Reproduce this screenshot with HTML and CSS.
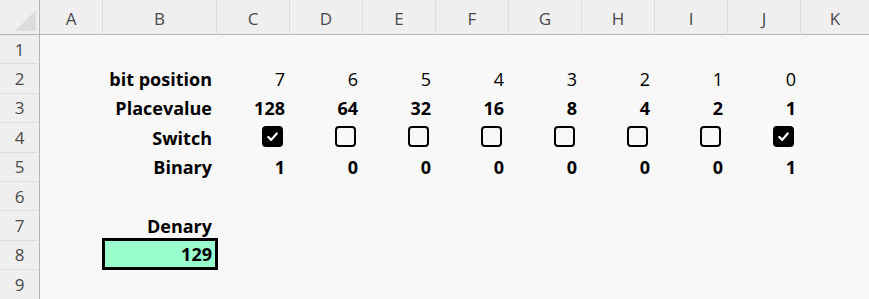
FILE: index.html
```html
<!DOCTYPE html>
<html>
<head>
<meta charset="utf-8">
<link rel="stylesheet" href="styles.css">
</head>
<body>
<div class="sheet">
  <div class="corner"><span class="tri"></span></div>
  <div class="ch">A</div><div class="ch">B</div><div class="ch">C</div><div class="ch">D</div><div class="ch">E</div><div class="ch">F</div><div class="ch">G</div><div class="ch">H</div><div class="ch">I</div><div class="ch">J</div><div class="ch last">K</div>

  <div class="rh">1</div><div class="c"></div><div class="c"></div><div class="c"></div><div class="c"></div><div class="c"></div><div class="c"></div><div class="c"></div><div class="c"></div><div class="c"></div><div class="c"></div><div class="c"></div>

  <div class="rh">2</div><div class="c"></div><div class="c b">bit position</div><div class="c">7</div><div class="c">6</div><div class="c">5</div><div class="c">4</div><div class="c">3</div><div class="c">2</div><div class="c">1</div><div class="c">0</div><div class="c"></div>

  <div class="rh">3</div><div class="c"></div><div class="c b">Placevalue</div><div class="c b">128</div><div class="c b">64</div><div class="c b">32</div><div class="c b">16</div><div class="c b">8</div><div class="c b">4</div><div class="c b">2</div><div class="c b">1</div><div class="c"></div>

  <div class="rh">4</div><div class="c"></div><div class="c b">Switch</div>
  <div class="c cbx"><span class="box on"><svg viewBox="0 0 20 20"><path d="M5 10.5 L8.5 14 L15 6.5"/></svg></span></div>
  <div class="c cbx"><span class="box"></span></div>
  <div class="c cbx"><span class="box"></span></div>
  <div class="c cbx"><span class="box"></span></div>
  <div class="c cbx"><span class="box"></span></div>
  <div class="c cbx"><span class="box"></span></div>
  <div class="c cbx"><span class="box"></span></div>
  <div class="c cbx"><span class="box on"><svg viewBox="0 0 20 20"><path d="M5 10.5 L8.5 14 L15 6.5"/></svg></span></div>
  <div class="c"></div>

  <div class="rh">5</div><div class="c"></div><div class="c b">Binary</div><div class="c b">1</div><div class="c b">0</div><div class="c b">0</div><div class="c b">0</div><div class="c b">0</div><div class="c b">0</div><div class="c b">0</div><div class="c b">1</div><div class="c"></div>

  <div class="rh">6</div><div class="c"></div><div class="c"></div><div class="c"></div><div class="c"></div><div class="c"></div><div class="c"></div><div class="c"></div><div class="c"></div><div class="c"></div><div class="c"></div><div class="c"></div>

  <div class="rh">7</div><div class="c"></div><div class="c b">Denary</div><div class="c"></div><div class="c"></div><div class="c"></div><div class="c"></div><div class="c"></div><div class="c"></div><div class="c"></div><div class="c"></div><div class="c"></div>

  <div class="rh">8</div><div class="c"></div><div class="c b result"><span>129</span></div><div class="c"></div><div class="c"></div><div class="c"></div><div class="c"></div><div class="c"></div><div class="c"></div><div class="c"></div><div class="c"></div><div class="c"></div>

  <div class="rh">9</div><div class="c"></div><div class="c"></div><div class="c"></div><div class="c"></div><div class="c"></div><div class="c"></div><div class="c"></div><div class="c"></div><div class="c"></div><div class="c"></div><div class="c"></div>
</div>
</body>
</html>
```
FILE: styles.css
```css
html, body {
  margin: 0;
  padding: 0;
  background: #f8f8f8;
  overflow: hidden;
}
.sheet {
  display: grid;
  grid-template-columns: 40px 63px 114px repeat(8, 73px) 1fr;
  grid-template-rows: 35px repeat(9, 29.4px);
  width: 869px;
  height: 299px;
  font-family: "Open Sans", "Liberation Sans", sans-serif;
  font-size: 18px;
  color: #000;
  background: #f8f8f8;
}
.corner {
  background: #efefef;
  border-right: 1px solid #b4b4b4;
  border-bottom: 1px solid #b4b4b4;
  position: relative;
}
.tri {
  position: absolute;
  right: 3px;
  bottom: 3px;
  width: 0;
  height: 0;
  border-left: 21px solid transparent;
  border-bottom: 21px solid #dcdcdc;
}
.ch {
  background: #efefef;
  border-bottom: 1px solid #b4b4b4;
  border-right: 1px solid #dcdcdc;
  display: flex;
  align-items: center;
  justify-content: center;
  color: #4a4a4a;
  font-size: 17px;
  padding-top: 3px;
}
.ch.last { border-right: none; }
.rh {
  background: #efefef;
  border-right: 1px solid #b4b4b4;
  border-bottom: 1px solid #dcdcdc;
  display: flex;
  align-items: center;
  justify-content: center;
  color: #4a4a4a;
  font-size: 17px;
}
.c {
  display: flex;
  align-items: center;
  justify-content: flex-end;
  padding-right: 5px;
  white-space: nowrap;
}
.b { font-weight: 700; }
.cbx { padding-right: 7px; padding-bottom: 3px; }
.box {
  box-sizing: border-box;
  width: 21px;
  height: 21px;
  border: 2px solid #000;
  border-radius: 4px;
  background: transparent;
  display: flex;
}
.box.on { background: #000; }
.box svg {
  width: 100%;
  height: 100%;
  fill: none;
  stroke: #fff;
  stroke-width: 2.6;
  stroke-linecap: round;
  stroke-linejoin: round;
}
.result {
  position: relative;
  z-index: 1;
  margin: -3px -1px 0 -1px;
  background: #99ffcc;
  border: 3px solid #000;
  padding-right: 3px;
}
```
